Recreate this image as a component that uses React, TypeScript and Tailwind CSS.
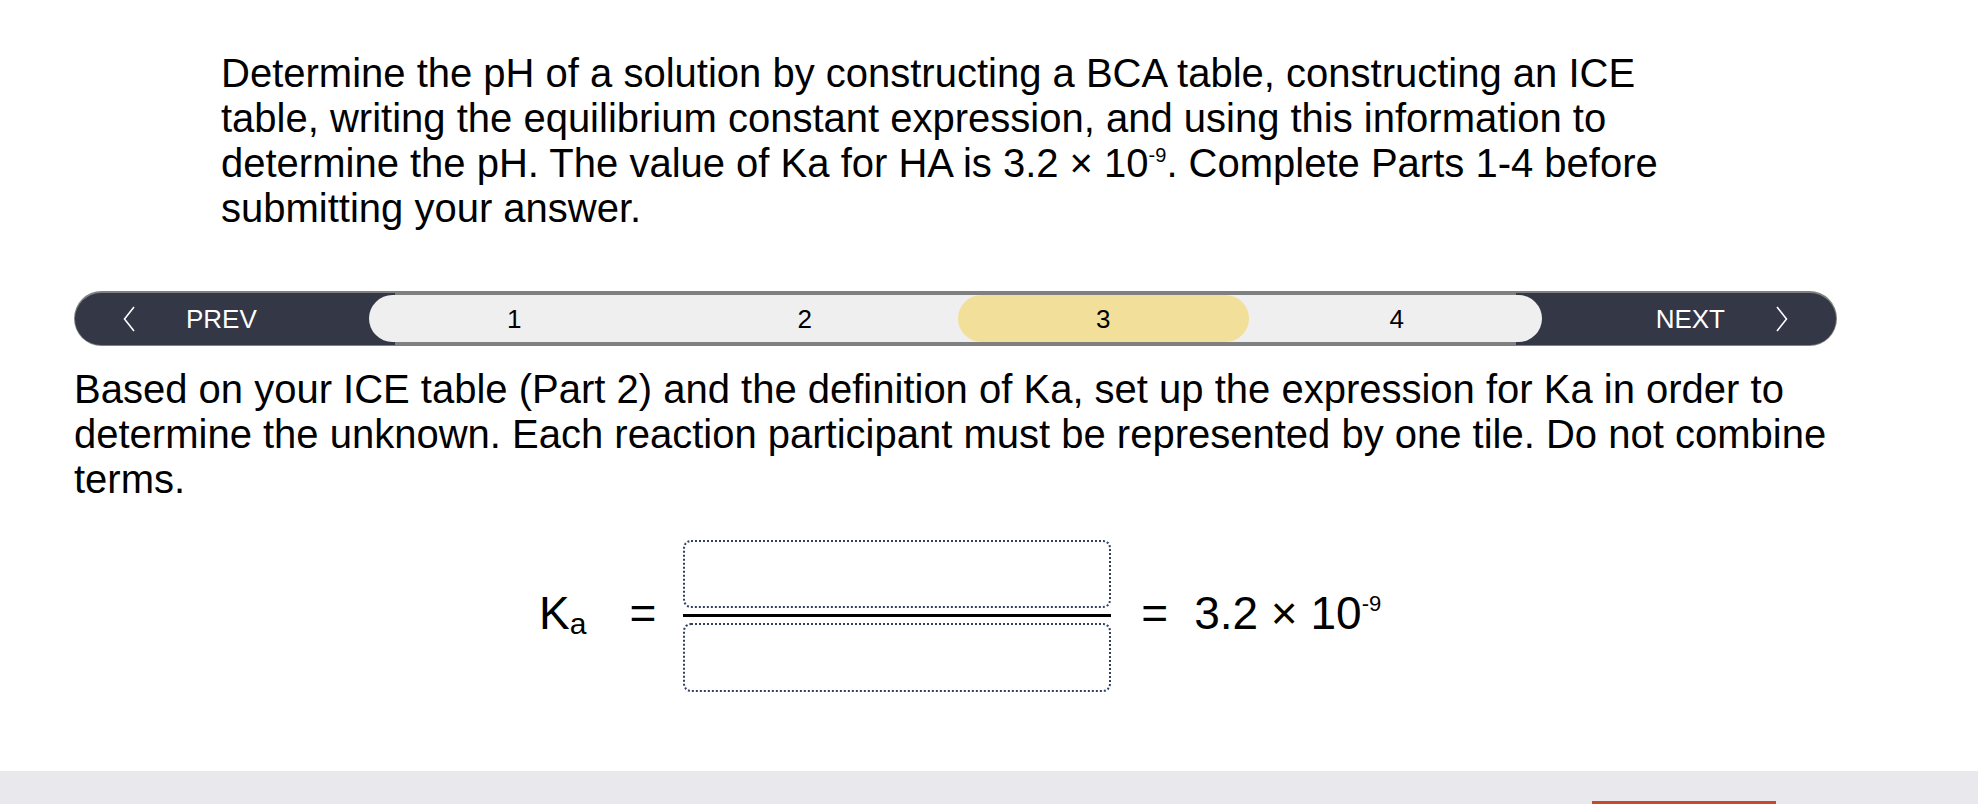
import React from "react";

function Chevron({ dir }: { dir: "left" | "right" }) {
  return (
    <svg width="12" height="26" viewBox="0 0 12 26" className="shrink-0">
      <polyline
        points={dir === "left" ? "11,1 1.5,13 11,25" : "1,1 10.5,13 1,25"}
        fill="none"
        stroke="white"
        strokeWidth="1.6"
        strokeLinejoin="miter"
      />
    </svg>
  );
}

export default function App() {
  const steps = ["1", "2", "3", "4"];
  return (
    <div className="w-[1978px] h-[804px] bg-white flex flex-col overflow-hidden text-black font-['Liberation_Sans',Arial,sans-serif]">
      <div className="pl-[221px] pt-[51px]">
        <p className="w-[1480px] text-[40px] leading-[45px]">
          Determine the pH of a solution by constructing a BCA table, constructing an ICE table, writing the
          equilibrium constant expression, and using this information to determine the pH. The value of Ka for HA
          is 3.2 × 10<span className="relative -top-[15px] text-[20px] leading-none">-9</span>. Complete Parts 1-4
          before submitting your answer.
        </p>
      </div>

      <div className="ml-[74px] w-[1763px] mt-[60px]">
        <div className="h-[55px] rounded-full bg-[#808080] flex items-center px-px">
          <div className="h-[52px] w-[320px] shrink-0 rounded-l-full bg-[#333746] flex items-center pl-[48px] text-white text-[26px] leading-none">
            <Chevron dir="left" />
            <span className="ml-[51px]">PREV</span>
          </div>
          <div className="relative z-10 -mx-[26px] flex-1 h-[47px] rounded-full bg-[#efefef] flex">
            {steps.map((s) =>
              s === "3" ? (
                <div key={s} className="flex-1 flex pl-[8px] pr-[3px]">
                  <div className="flex-1 flex items-center justify-center text-[26px] leading-none rounded-full bg-[#f2df9a]">
                    {s}
                  </div>
                </div>
              ) : (
                <div key={s} className="flex-1 flex items-center justify-center text-[26px] leading-none">
                  {s}
                </div>
              )
            )}
          </div>
          <div className="h-[52px] w-[320px] shrink-0 rounded-r-full bg-[#333746] flex items-center justify-end pr-[48px] text-white text-[26px] leading-none">
            <span>NEXT</span>
            <span className="ml-[51px] flex">
              <Chevron dir="right" />
            </span>
          </div>
        </div>

        <p className="mt-[21px] text-[40px] leading-[45px]">
          Based on your ICE table (Part 2) and the definition of Ka, set up the expression for Ka in order to
          determine the unknown. Each reaction participant must be represented by one tile. Do not combine terms.
        </p>

        <div className="mt-[38px] flex items-center pl-[465px]">
          <div className="mb-[6px] text-[46px] leading-none whitespace-nowrap">
            K<span className="relative top-[5px] text-[30px] leading-none">a</span>
          </div>
          <div className="mb-[6px] ml-[43px] text-[46px] leading-none">=</div>
          <div className="ml-[27px] w-[428px] flex flex-col">
            <div className="h-[68px] rounded-[8px] border-2 border-dotted border-[#2f4260]" />
            <div className="mt-[6px] h-[3px] bg-black" />
            <div className="mt-[6px] h-[69px] rounded-[8px] border-2 border-dotted border-[#2f4260]" />
          </div>
          <div className="mb-[6px] ml-[30px] text-[46px] leading-none">=</div>
          <div className="mb-[6px] ml-[26px] text-[46px] leading-none whitespace-nowrap">
            3.2 × 10<span className="relative -top-[18px] text-[22px] leading-none">-9</span>
          </div>
        </div>
      </div>

      <div className="mt-auto h-[33px] shrink-0 bg-[#e9e8ed] flex justify-end pr-[202px] pt-[30px] overflow-hidden">
        <div className="w-[184px] h-[30px] shrink-0 bg-[#c8472f]" />
      </div>
    </div>
  );
}
